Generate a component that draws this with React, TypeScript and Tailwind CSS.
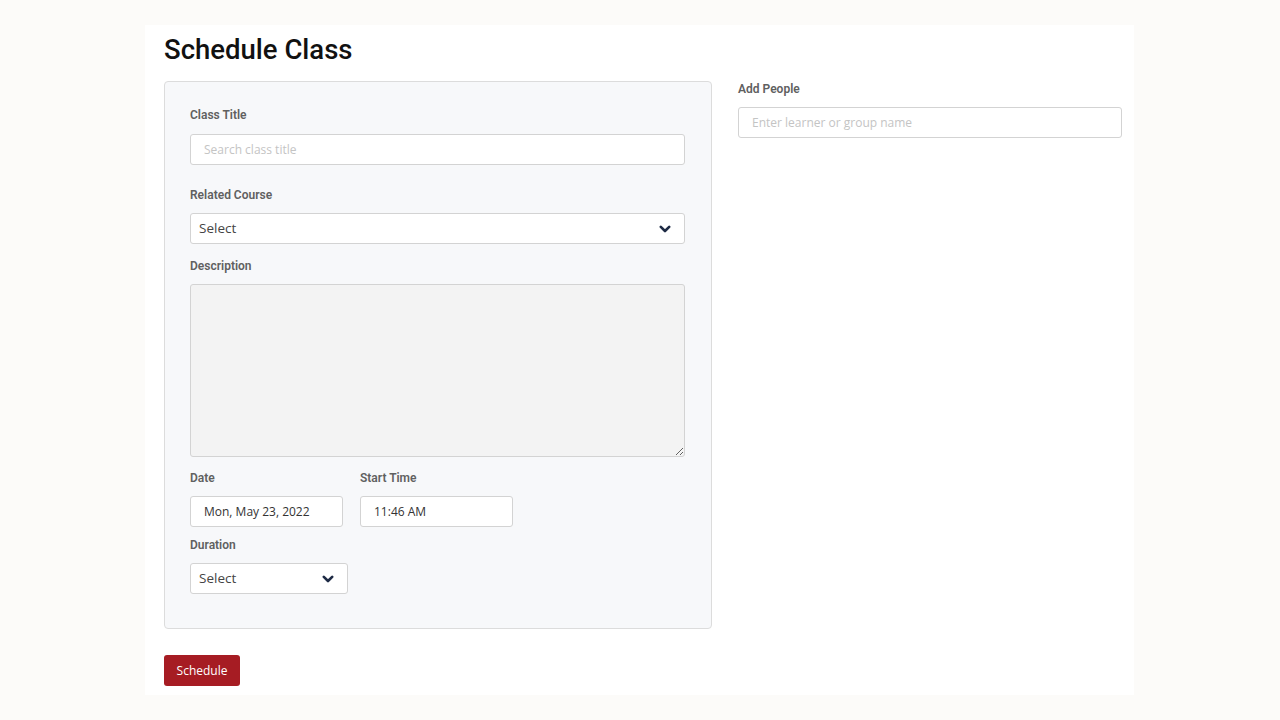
import { useState } from 'react'

const labelCls = "block text-[12px] leading-4 font-semibold text-[#606060] [font-family:Roboto,'Liberation_Sans',sans-serif]"
const inputCls =
  "h-[31px] border border-[#d3d3d3] rounded-[3px] bg-white px-[13px] text-[12px] text-[#333] placeholder:text-[#c4c4c4] outline-none [font-family:'Open_Sans','Liberation_Sans',sans-serif]"

const Chevron = () => (
  <svg width="12" height="8" viewBox="0 0 12 8" fill="none">
    <path d="M1.8 1.8 6 6l4.2-4.2" stroke="#1e2b45" strokeWidth="2.6" strokeLinecap="round" strokeLinejoin="round" />
  </svg>
)

const SelectBox = ({ width }: { width: string }) => (
  <div className={`${width} h-[31px] border border-[#d3d3d3] rounded-[3px] bg-white flex items-center justify-between pl-[8px] pr-[13px]`}>
    <span className="text-[13.5px] text-[#444] [font-family:'Open_Sans','Liberation_Sans',sans-serif]">Select</span>
    <Chevron />
  </div>
)

export default function App() {
  const [title, setTitle] = useState('')
  const [people, setPeople] = useState('')

  return (
    <div className="min-h-[720px] w-full bg-[#fcfbf9] pt-[25px] pl-[145px]">
      <div className="w-[989px] h-[670px] bg-white pl-[19px] pt-[9px]">
        <h1 className="text-[27.5px] leading-8 font-medium text-[#111] [font-family:Roboto,'Liberation_Sans',sans-serif]">
          Schedule Class
        </h1>

        <div className="flex mt-[15px] gap-[26px]">
          {/* form panel */}
          <div className="w-[548px] h-[548px] bg-[#f7f8fa] border border-[#dcdcdc] rounded-[4px] pl-[25px] pt-[25px]">
            <label className={labelCls}>Class Title</label>
            <input
              value={title}
              onChange={(e) => setTitle(e.target.value)}
              placeholder="Search class title"
              className={`${inputCls} w-[495px] mt-[11px]`}
            />

            <label className={`${labelCls} mt-[22px]`}>Related Course</label>
            <div className="mt-[10px]">
              <SelectBox width="w-[495px]" />
            </div>

            <label className={`${labelCls} mt-[14px]`}>Description</label>
            <textarea className="block w-[495px] h-[173px] mt-[10px] bg-[#f3f3f3] border border-[#d3d3d3] rounded-[3px]" />

            <div className="flex gap-[17px] mt-[13px]">
              <div>
                <label className={labelCls}>Date</label>
                <div className={`${inputCls} w-[153px] mt-[10px] flex items-center`}>Mon, May 23, 2022</div>
              </div>
              <div>
                <label className={labelCls}>Start Time</label>
                <div className={`${inputCls} w-[153px] mt-[10px] flex items-center`}>11:46 AM</div>
              </div>
            </div>

            <label className={`${labelCls} mt-[10px]`}>Duration</label>
            <div className="mt-[10px]">
              <SelectBox width="w-[158px]" />
            </div>
          </div>

          {/* add people */}
          <div>
            <label className={labelCls}>Add People</label>
            <input
              value={people}
              onChange={(e) => setPeople(e.target.value)}
              placeholder="Enter learner or group name"
              className={`${inputCls} w-[384px] mt-[10px]`}
            />
          </div>
        </div>

        <button className="mt-[26px] h-[31px] w-[76px] bg-[#a61c23] rounded-[3px] text-white text-[12px] [font-family:'Open_Sans','Liberation_Sans',sans-serif]">
          Schedule
        </button>
      </div>
    </div>
  )
}
